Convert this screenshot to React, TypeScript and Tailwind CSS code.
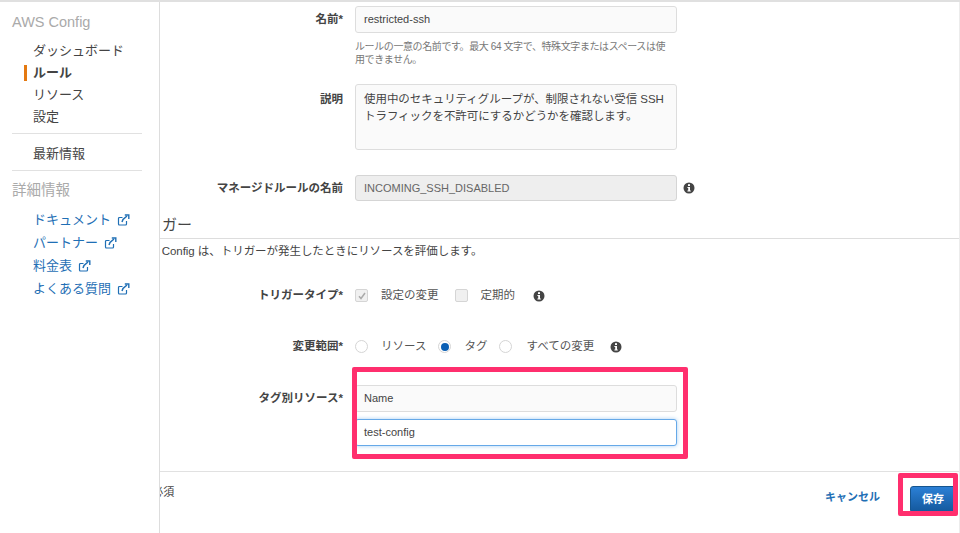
import React from "react";

const FONT = "font-['Liberation_Sans','Noto_Sans_CJK_JP',sans-serif]";

const InfoIcon = () => (
  <svg width="12" height="12" viewBox="0 0 12 12" className="shrink-0">
    <circle cx="6" cy="6" r="5.5" fill="#444" />
    <rect x="5" y="2.2" width="2" height="1.8" fill="#fff" />
    <path d="M4.4 5h2.6v3.6h.8v1H4.4v-1h.8V6h-.8z" fill="#fff" />
  </svg>
);

const ExtLink = () => (
  <svg width="13" height="12" viewBox="0 0 13 12" fill="none" stroke="#1f6fb5" className="shrink-0">
    <path d="M9.5 7v3a1 1 0 0 1-1 1h-6a1 1 0 0 1-1-1V4.500a1 1 0 0 1 1-1h3" strokeWidth="1.200" />
    <path d="M5 8l1-2.500 4-3.500" strokeWidth="1.500" />
    <path d="M7.800 1h4v4" strokeWidth="1.400" />
  </svg>
);

const NavItem = ({ label, active }: { label: string; active?: boolean }) => (
  <div className="relative h-[22px] pl-[33px] text-[13px] leading-[22px] text-[#444]">
    {active && <span className="absolute left-[24px] top-[3px] h-[16px] w-[3px] bg-[#e47911]" />}
    <span className={active ? "font-bold" : ""}>{label}</span>
  </div>
);

const DocLink = ({ label }: { label: string }) => (
  <div className="flex h-[23px] items-center gap-[6px] pl-[33px] text-[13px] text-[#1f6fb5]">
    <span>{label}</span>
    <ExtLink />
  </div>
);

const Sidebar = () => (
  <aside className="w-[160px] shrink-0 border-r border-[#ddd]">
    <div className="pl-[12px] pt-[10px] text-[14.500px] leading-[20px] text-[#aaa]">AWS Config</div>
    <div className="pt-[8px]">
      <NavItem label="ダッシュボード" />
      <NavItem label="ルール" active />
      <NavItem label="リソース" />
      <NavItem label="設定" />
    </div>
    <div className="ml-[12px] mr-[17px] mt-[5px] border-t border-[#e1e1e1]" />
    <div className="mt-[9px] pl-[33px] text-[13px] leading-[22px] text-[#444]">最新情報</div>
    <div className="ml-[12px] mr-[17px] mt-[5px] border-t border-[#e1e1e1]" />
    <div className="mt-[9px] pl-[12px] text-[14.500px] leading-[20px] text-[#aaa]">詳細情報</div>
    <div className="mt-[8px]">
      <DocLink label="ドキュメント" />
      <DocLink label="パートナー" />
      <DocLink label="料金表" />
      <DocLink label="よくある質問" />
    </div>
  </aside>
);

const Row = ({ label, children, className, labelClass }: { label: string; children: React.ReactNode; className?: string; labelClass?: string }) => (
  <div className={`flex ${className ?? ""}`}>
    <div className={`w-[183px] shrink-0 text-right text-[11.500px] font-bold text-[#444] ${labelClass ?? "leading-[27px]"}`}>{label}</div>
    <div className="ml-[12px] min-w-0 flex-1">{children}</div>
  </div>
);

const TextBox = ({ value, className }: { value: string; className?: string }) => (
  <div className={`h-[27px] w-[322px] rounded-[3px] border bg-[#fafafa] pl-[8px] text-[11px] leading-[25px] text-[#444] ${className ?? "border-[#ddd]"}`}>
    {value}
  </div>
);

const CheckBox = ({ checked }: { checked?: boolean }) => (
  <span className="flex h-[13px] w-[13px] shrink-0 items-center justify-center rounded-[2px] border border-[#d5d5d5] bg-[#f0f0f0]">
    {checked && (
      <svg width="10" height="10" viewBox="0 0 10 10" fill="none" stroke="#aaa" strokeWidth="1.500">
        <path d="M2 5.200l2 2.300 4-5.500" />
      </svg>
    )}
  </span>
);

const Radio = ({ checked }: { checked?: boolean }) => (
  <span className="flex h-[13px] w-[13px] shrink-0 items-center justify-center rounded-full border border-[#d5d5d5] bg-white">
    {checked && <span className="h-[8px] w-[8px] rounded-full bg-[#0b5fb4]" />}
  </span>
);

export default function App() {
  return (
    <div className={`relative flex h-[533px] w-[960px] overflow-hidden border-t-2 border-[#e0e0e0] bg-white ${FONT}`}>
      <Sidebar />
      <main className="min-w-0 flex-1 overflow-hidden border-r border-[#ececec]">
        <Row label="名前*" className="mt-[4px]">
          <TextBox value="restricted-ssh" />
          <p className="mt-[7px] w-[322px] text-[10px] leading-[13px] tracking-[-0.4px] text-[#777]">
            ルールの一意の名前です。最大 64 文字で、特殊文字またはスペースは使
            <br />
            用できません。
          </p>
        </Row>
        <Row label="説明" className="mt-[18px]" labelClass="leading-[31px]">
          <div className="h-[66px] w-[322px] rounded-[3px] border border-[#ddd] bg-[#fafafa] px-[8px] pt-[6px] text-[11.500px] leading-[17px] tracking-[-0.05px] text-[#444]">
            使用中のセキュリティグループが、制限されない受信 SSH トラフィックを不許可にするかどうかを確認します。
          </div>
        </Row>
        <Row label="マネージドルールの名前" className="mt-[25px]">
          <div className="flex items-center gap-[6px]">
            <div className="h-[26px] w-[322px] rounded-[3px] border border-[#d5d5d5] bg-[#eee] pl-[8px] text-[11px] leading-[24px] text-[#666]">
              INCOMING_SSH_DISABLED
            </div>
            <InfoIcon />
          </div>
        </Row>
        <h2 className="-ml-[28px] mt-[13px] text-[15px] leading-[20px] text-[#444]">トリガー</h2>
        <div className="mt-[3px] border-t border-[#ddd]" />
        <p className="-ml-[27px] mt-[4px] text-[11.500px] leading-[16px] tracking-[-0.05px] text-[#444]">
          AWS Config は、トリガーが発生したときにリソースを評価します。
        </p>
        <Row label="トリガータイプ*" className="mt-[23px]">
          <div className="flex h-[27px] items-center text-[11.500px] text-[#555]">
            <CheckBox checked />
            <span className="ml-[13px]">設定の変更</span>
            <span className="ml-[16px]"><CheckBox /></span>
            <span className="ml-[13px]">定期的</span>
            <span className="ml-[18px]"><InfoIcon /></span>
          </div>
        </Row>
        <Row label="変更範囲*" className="mt-[24px]">
          <div className="flex h-[27px] items-center text-[11.500px] text-[#555]">
            <Radio />
            <span className="ml-[13px]">リソース</span>
            <span className="ml-[12px]"><Radio checked /></span>
            <span className="ml-[13px]">タグ</span>
            <span className="ml-[12px]"><Radio /></span>
            <span className="ml-[14px]">すべての変更</span>
            <span className="ml-[16px]"><InfoIcon /></span>
          </div>
        </Row>
        <Row label="タグ別リソース*" className="mt-[25px]">
          <TextBox value="Name" />
          <TextBox value="test-config" className="mt-[7px] border-[#66a9e8] bg-white shadow-[0_0_4px_#a8cff2]" />
        </Row>
        <div className="mt-[25px] border-t border-[#e1e1e1]" />
        <div className="flex h-[61px] items-start justify-between">
          <span className="-ml-[15px] mt-[12px] text-[11px] leading-[16px] text-[#444]">* 必須</span>
          <div className="mr-[3px] mt-[14px] flex items-center">
            <span className="mb-[5px] text-[11px] font-bold text-[#1f6fb5]">キャンセル</span>
            <span className="ml-[30px] flex h-[27px] w-[46px] items-center justify-center rounded-[3px] border border-[#15558f] bg-gradient-to-b from-[#2b80d6] to-[#14589c] text-[11px] font-bold text-white">
              保存
            </span>
          </div>
        </div>
      </main>
      <div className="pointer-events-none absolute left-[352px] top-[365px] h-[92px] w-[336px] rounded-[2px] border-[5px] border-[#ff2f6e]" />
      <div className="pointer-events-none absolute left-[898px] top-[471px] h-[43px] w-[60px] rounded-[2px] border-[5px] border-[#ff2f6e]" />
    </div>
  );
}
